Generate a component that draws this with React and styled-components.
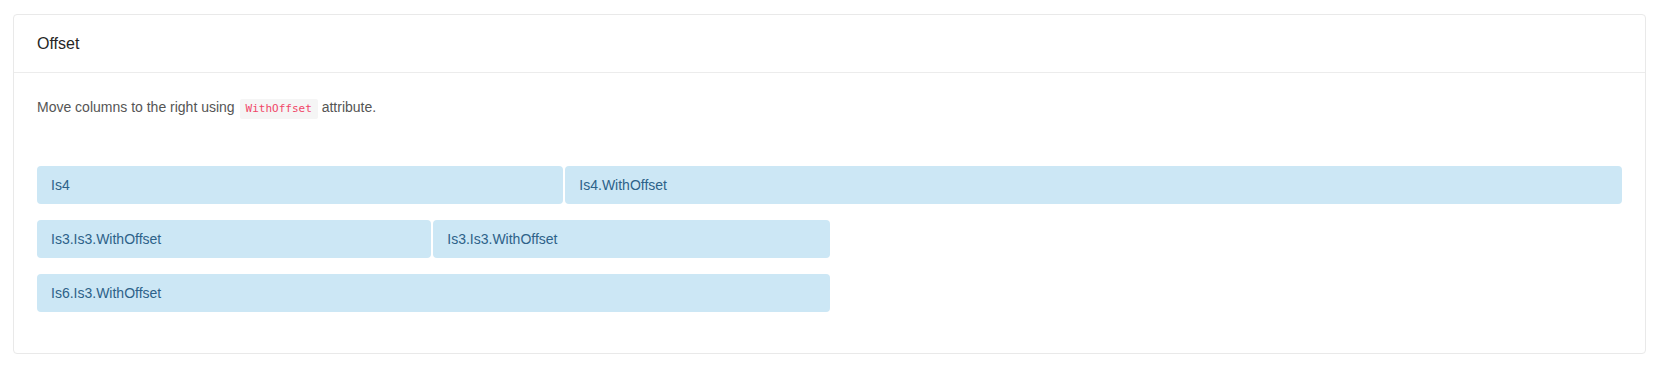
import React from "react";
import styled, { createGlobalStyle } from "styled-components";

const GlobalStyle = createGlobalStyle`
  html, body {
    margin: 0;
    padding: 0;
    background: #ffffff;
  }
  body {
    font-family: "Liberation Sans", Arial, sans-serif;
    font-size: 14px;
    color: #4a4a4a;
  }
`;

const Page = styled.div`
  padding: 14px 14px 16px 13px;
`;

const Card = styled.div`
  border: 1px solid #e9e9e9;
  border-radius: 4px;
  background: #fff;
`;

const CardHeader = styled.div`
  height: 57px;
  display: flex;
  align-items: center;
  padding: 0 23px;
  border-bottom: 1px solid #ececec;
  font-size: 16px;
  color: #262626;
`;

const CardBody = styled.div`
  padding: 24px 23px 41px 23px;
`;

const Lead = styled.p`
  margin: 0 0 47px;
  line-height: 21px;
  font-size: 14px;
  color: #555555;
`;

const Code = styled.code`
  font-family: "DejaVu Sans Mono", "Liberation Mono", monospace;
  font-size: 11px;
  color: #f14668;
  background: #f5f5f5;
  padding: 3px 6px 4px;
  margin: 0 0 0 1px;
  border-radius: 2px;
`;

const Row = styled.div`
  display: flex;
  margin-bottom: 16px;

  &:last-child {
    margin-bottom: 0;
  }
`;

const Column = styled.div`
  width: ${(p) => (p.span / 12) * 100}%;
  height: 38px;
  display: flex;
  align-items: center;
  padding: 0 14px;
  box-sizing: border-box;
  background: #cce7f5;
  color: #2d6289;
  font-size: 14px;
  border-radius: 4px;

  &:not(:last-child) {
    width: calc(${(p) => (p.span / 12) * 100}% - 2px);
    margin-right: 2px;
  }
`;

const rows = [
  [
    { span: 4, label: "Is4" },
    { span: 8, label: "Is4.WithOffset" },
  ],
  [
    { span: 3, label: "Is3.Is3.WithOffset" },
    { span: 3, label: "Is3.Is3.WithOffset" },
  ],
  [{ span: 6, label: "Is6.Is3.WithOffset" }],
];

export default function App() {
  return (
    <>
      <GlobalStyle />
      <Page>
        <Card>
          <CardHeader>Offset</CardHeader>
          <CardBody>
            <Lead>
              Move columns to the right using <Code>WithOffset</Code> attribute.
            </Lead>
            {rows.map((row, i) => (
              <Row key={i}>
                {row.map((col, j) => (
                  <Column key={j} span={col.span}>
                    {col.label}
                  </Column>
                ))}
              </Row>
            ))}
          </CardBody>
        </Card>
      </Page>
    </>
  );
}
